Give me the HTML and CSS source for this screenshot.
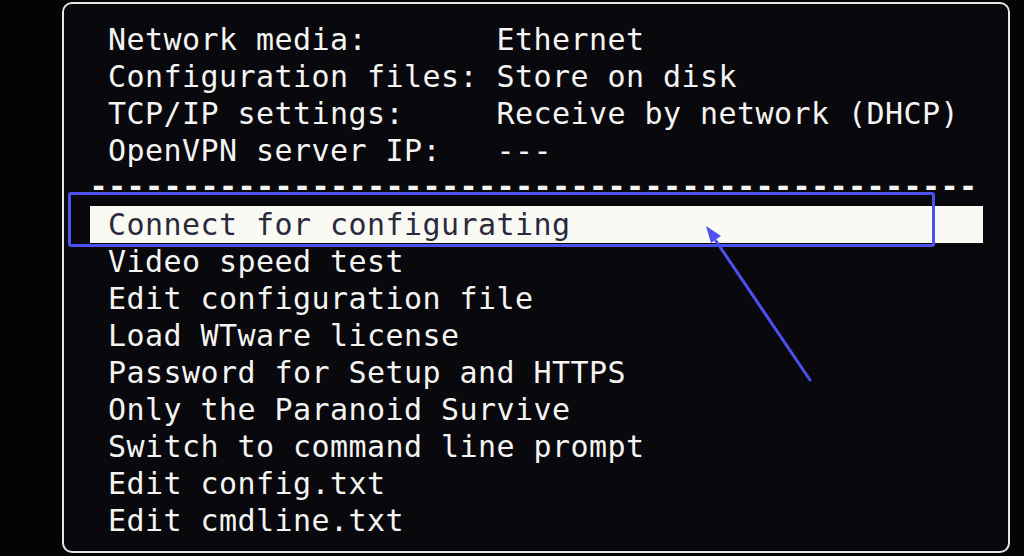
FILE: index.html
```html
<!DOCTYPE html>
<html>
<head>
<meta charset="utf-8">
<link rel="stylesheet" href="styles.css">
</head>
<body>
<div class="screen">
  <div class="frame">
    <div class="info">
      <div class="row"><span class="label">Network media:</span><span class="value">Ethernet</span></div>
      <div class="row"><span class="label">Configuration files:</span><span class="value">Store on disk</span></div>
      <div class="row"><span class="label">TCP/IP settings:</span><span class="value">Receive by network (DHCP)</span></div>
      <div class="row"><span class="label">OpenVPN server IP:</span><span class="value">---</span></div>
    </div>
    <div class="divider">------------------------------------------------</div>
    <ul class="menu">
      <li class="item selected">Connect for configurating</li>
      <li class="item">Video speed test</li>
      <li class="item">Edit configuration file</li>
      <li class="item">Load WTware license</li>
      <li class="item">Password for Setup and HTTPS</li>
      <li class="item">Only the Paranoid Survive</li>
      <li class="item">Switch to command line prompt</li>
      <li class="item">Edit config.txt</li>
      <li class="item">Edit cmdline.txt</li>
    </ul>
  </div>
  <div class="callout"></div>
  <svg class="arrow" width="1024" height="556" viewBox="0 0 1024 556">
    <line x1="810" y1="380" x2="716" y2="241" stroke="#4b50ee" stroke-width="3" stroke-linecap="round"/>
    <polygon points="706,226 721,236 711,243" fill="#4b50ee"/>
  </svg>
</div>
</body>
</html>
```

FILE: styles.css
```css
html, body {
  margin: 0;
  padding: 0;
  background: #040406;
}

.screen {
  position: relative;
  width: 1024px;
  height: 556px;
  box-sizing: border-box;
  padding: 2px 14px 0 62px;
  display: flex;
  overflow: hidden;
}

.frame {
  width: 948px;
  height: 551px;
  box-sizing: border-box;
  border: 2px solid #e6e6e6;
  border-radius: 10px;
  background: #08080d;
  padding: 17px 0 0 25.5px;
  font-family: "DejaVu Sans Mono", monospace;
  font-size: 30px;
  line-height: 37px;
  letter-spacing: 0.44px;
  color: #f4f4f2;
  display: flex;
  flex-direction: column;
}

.info {
  display: flex;
  flex-direction: column;
  padding-left: 18.5px;
}

.row {
  display: flex;
  white-space: pre;
}

.label {
  width: 388.5px;
  flex: none;
}

.divider {
  white-space: pre;
  overflow: hidden;
  font-weight: bold;
  margin-top: -1px;
  margin-bottom: 1px;
}

.menu {
  list-style: none;
  margin: 0;
  padding: 0;
}

.item {
  padding-left: 18.5px;
  white-space: pre;
}

.item.selected {
  background: #fafaf5;
  color: #2a2a3c;
  width: 893px;
  box-sizing: border-box;
}

.callout {
  position: absolute;
  left: 68px;
  top: 192px;
  width: 867px;
  height: 55px;
  box-sizing: border-box;
  border: 3px solid #4b50ee;
  border-radius: 3px;
}

.arrow {
  position: absolute;
  left: 0;
  top: 0;
}
```
